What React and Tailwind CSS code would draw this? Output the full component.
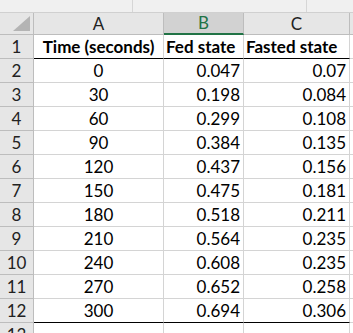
import React from "react";

const rows = [
  ["0", "0.047", "0.07"],
  ["30", "0.198", "0.084"],
  ["60", "0.299", "0.108"],
  ["90", "0.384", "0.135"],
  ["120", "0.437", "0.156"],
  ["150", "0.475", "0.181"],
  ["180", "0.518", "0.211"],
  ["210", "0.564", "0.235"],
  ["240", "0.608", "0.235"],
  ["270", "0.652", "0.258"],
  ["300", "0.694", "0.306"],
];

const font = { fontFamily: "Lato, 'Liberation Sans', sans-serif" };

function RowHead({ n }) {
  return (
    <div className="h-[24px] bg-[#e6e6e6] border-r border-b border-[#bdbdbd] flex items-center justify-center text-[17px] text-[#222]">
      {n}
    </div>
  );
}

export default function App() {
  return (
    <div className="w-[353px] h-[333px] overflow-hidden bg-white text-black" style={font}>
      <div className="h-[13px] bg-[#f0f0f0] border-b border-[#d0d0d0] flex">
        <div className="w-[133px] border-r border-[#d6d6d6]" />
        <div className="w-[174px] border-r border-[#d6d6d6]" />
        <div className="flex-1" />
      </div>
      <div className="grid grid-cols-[34px_130px_80px_106px_1fr]">
        <div className="h-[22px] bg-[#e6e6e6] border-r border-b border-[#bdbdbd] relative">
          <svg className="absolute right-[3px] bottom-[3px]" width="17" height="15" viewBox="0 0 17 15">
            <polygon points="17,0 17,15 0,15" fill="#b4b4b4" />
          </svg>
        </div>
        <div className="h-[22px] bg-[#e6e6e6] border-r border-b border-[#bdbdbd] flex items-center justify-center text-[17px] text-[#222]">A</div>
        <div className="h-[22px] bg-[#d2d2d2] border-r border-[#bdbdbd] border-b-2 border-b-[#217346] flex items-center justify-center text-[17px] text-[#217346]">B</div>
        <div className="h-[22px] bg-[#e6e6e6] border-r border-b border-[#bdbdbd] flex items-center justify-center text-[17px] text-[#222]">C</div>
        <div className="h-[22px] bg-[#e6e6e6] border-b border-[#bdbdbd]" />

        <RowHead n="1" />
        <div className="h-[24px] border-r border-[#d4d4d4] border-b border-b-black flex items-center justify-center text-[17px] font-bold whitespace-nowrap">Time (seconds)</div>
        <div className="h-[24px] border-r border-[#d4d4d4] border-b border-b-black flex items-center px-[2px] text-[17px] font-bold whitespace-nowrap">Fed state</div>
        <div className="h-[24px] border-r border-[#d4d4d4] border-b border-b-black flex items-center px-[2px] text-[17px] font-bold whitespace-nowrap">Fasted state</div>
        <div className="h-[24px] border-b border-[#d4d4d4]" />

        {rows.map((r, i) => {
          const last = i === rows.length - 1;
          const bb = last ? "border-b-black" : "border-b-[#d4d4d4]";
          return (
            <React.Fragment key={i}>
              <RowHead n={String(i + 2)} />
              <div className={`h-[24px] border-r border-r-[#d4d4d4] border-b ${bb} flex items-center justify-center text-[17px]`}>{r[0]}</div>
              <div className={`h-[24px] border-r border-r-[#d4d4d4] border-b ${bb} flex items-center justify-end px-[3px] text-[17px]`}>{r[1]}</div>
              <div className={`h-[24px] border-r border-r-[#d4d4d4] border-b ${bb} flex items-center justify-end px-[3px] text-[17px]`}>{r[2]}</div>
              <div className="h-[24px] border-b border-[#d4d4d4]" />
            </React.Fragment>
          );
        })}

        <RowHead n="13" />
        <div className="h-[24px] border-r border-[#d4d4d4]" />
        <div className="h-[24px] border-r border-[#d4d4d4]" />
        <div className="h-[24px] border-r border-[#d4d4d4]" />
        <div className="h-[24px]" />
      </div>
    </div>
  );
}
